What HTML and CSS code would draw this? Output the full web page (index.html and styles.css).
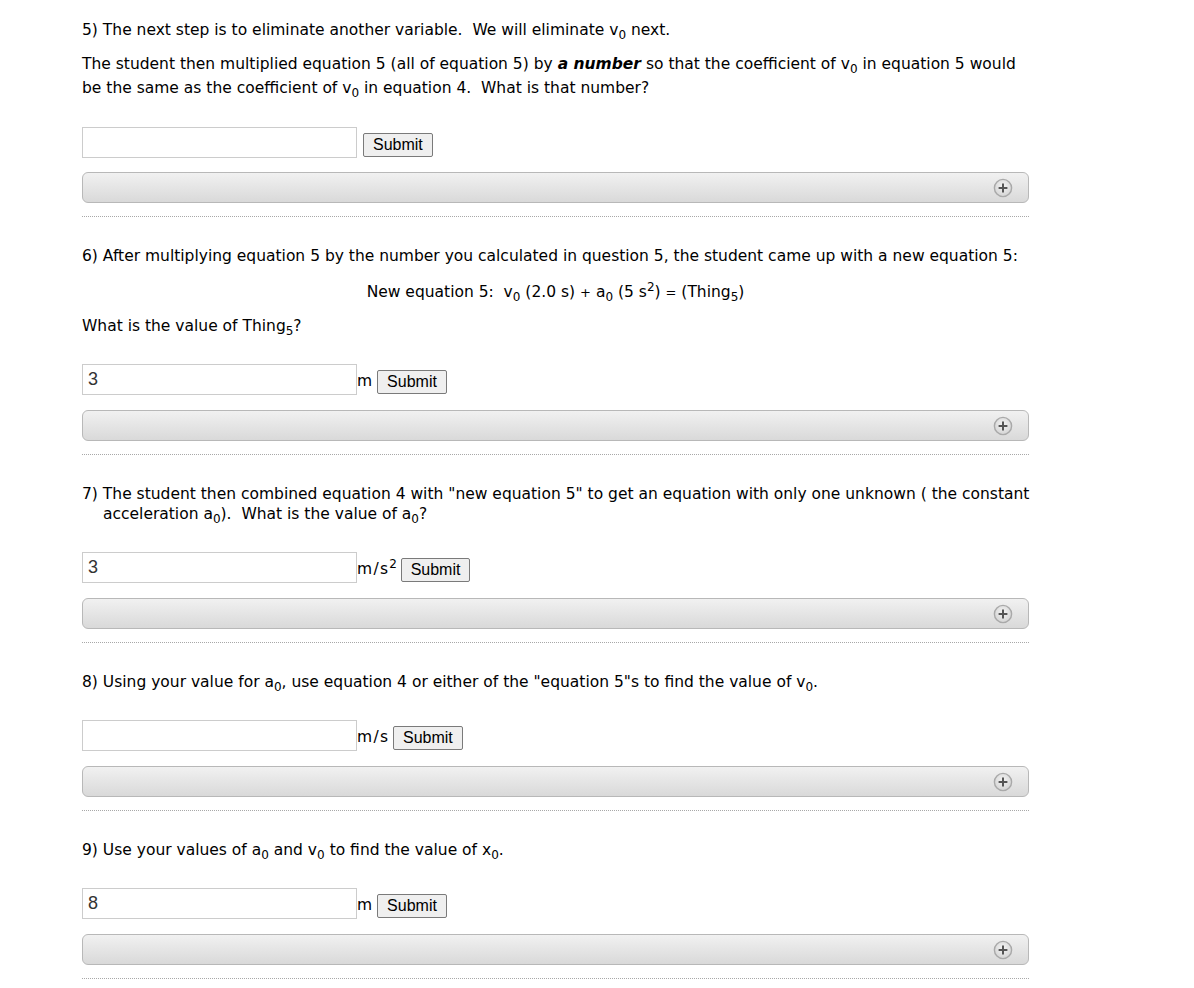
FILE: index.html
```html
<!DOCTYPE html>
<html>
<head>
<meta charset="utf-8">
<link rel="stylesheet" href="styles.css">
</head>
<body>
<div class="page">

  <section class="q">
    <p class="title">5) The next step is to eliminate another variable.&nbsp; We will eliminate v<sub>0</sub> next.</p>
    <p class="body">The student then multiplied equation 5 (all of equation 5) by <b><i>a number</i></b> so that the coefficient of v<sub>0</sub> in equation 5 would be the same as the coefficient of v<sub>0</sub> in equation 4.&nbsp; What is that number?</p>
    <div class="answer">
      <input class="field" type="text" value="">
      <button class="submit submit-nounit">Submit</button>
    </div>
    <div class="bar"><svg class="plus" viewBox="0 0 20 20" width="20" height="20"><defs><radialGradient id="g1" cx="50%" cy="40%" r="60%"><stop offset="0" stop-color="#f4f4f4"/><stop offset="1" stop-color="#d4d4d4"/></radialGradient></defs><circle cx="10" cy="10" r="8.6" fill="url(#g1)" stroke="#a9a9a9" stroke-width="1.4"/><path d="M10 5.6V14.4M5.6 10H14.4" stroke="#555" stroke-width="2"/></svg></div>
    <div class="dots"></div>
  </section>

  <section class="q">
    <p class="title">6) After multiplying equation 5 by the number you calculated in question 5, the student came up with a new equation 5:</p>
    <p class="eq">New equation 5:&nbsp; v<sub>0</sub> (2.0 s) <span class="op">+</span> a<sub>0</sub> (5 s<sup>2</sup>) <span class="op">=</span> (Thing<sub>5</sub>)</p>
    <p class="ask">What is the value of Thing<sub>5</sub>?</p>
    <div class="answer">
      <input class="field" type="text" value="3">
      <span class="unit">m</span>
      <button class="submit">Submit</button>
    </div>
    <div class="bar"><svg class="plus" viewBox="0 0 20 20" width="20" height="20"><defs><radialGradient id="g2" cx="50%" cy="40%" r="60%"><stop offset="0" stop-color="#f4f4f4"/><stop offset="1" stop-color="#d4d4d4"/></radialGradient></defs><circle cx="10" cy="10" r="8.6" fill="url(#g2)" stroke="#a9a9a9" stroke-width="1.4"/><path d="M10 5.6V14.4M5.6 10H14.4" stroke="#555" stroke-width="2"/></svg></div>
    <div class="dots"></div>
  </section>

  <section class="q">
    <p class="title hang">7) The student then combined equation 4 with "new equation 5" to get an equation with only one unknown ( the constant acceleration a<sub>0</sub>).&nbsp; What is the value of a<sub>0</sub>?</p>
    <div class="answer">
      <input class="field" type="text" value="3">
      <span class="unit">m/s<sup>2</sup></span>
      <button class="submit">Submit</button>
    </div>
    <div class="bar"><svg class="plus" viewBox="0 0 20 20" width="20" height="20"><defs><radialGradient id="g3" cx="50%" cy="40%" r="60%"><stop offset="0" stop-color="#f4f4f4"/><stop offset="1" stop-color="#d4d4d4"/></radialGradient></defs><circle cx="10" cy="10" r="8.6" fill="url(#g3)" stroke="#a9a9a9" stroke-width="1.4"/><path d="M10 5.6V14.4M5.6 10H14.4" stroke="#555" stroke-width="2"/></svg></div>
    <div class="dots"></div>
  </section>

  <section class="q">
    <p class="title">8) Using your value for a<sub>0</sub>, use equation 4 or either of the "equation 5"s to find the value of v<sub>0</sub>.</p>
    <div class="answer">
      <input class="field" type="text" value="">
      <span class="unit">m/s</span>
      <button class="submit">Submit</button>
    </div>
    <div class="bar"><svg class="plus" viewBox="0 0 20 20" width="20" height="20"><defs><radialGradient id="g4" cx="50%" cy="40%" r="60%"><stop offset="0" stop-color="#f4f4f4"/><stop offset="1" stop-color="#d4d4d4"/></radialGradient></defs><circle cx="10" cy="10" r="8.6" fill="url(#g4)" stroke="#a9a9a9" stroke-width="1.4"/><path d="M10 5.6V14.4M5.6 10H14.4" stroke="#555" stroke-width="2"/></svg></div>
    <div class="dots"></div>
  </section>

  <section class="q">
    <p class="title">9) Use your values of a<sub>0</sub> and v<sub>0</sub> to find the value of x<sub>0</sub>.</p>
    <div class="answer">
      <input class="field" type="text" value="8">
      <span class="unit">m</span>
      <button class="submit">Submit</button>
    </div>
    <div class="bar"><svg class="plus" viewBox="0 0 20 20" width="20" height="20"><defs><radialGradient id="g5" cx="50%" cy="40%" r="60%"><stop offset="0" stop-color="#f4f4f4"/><stop offset="1" stop-color="#d4d4d4"/></radialGradient></defs><circle cx="10" cy="10" r="8.6" fill="url(#g5)" stroke="#a9a9a9" stroke-width="1.4"/><path d="M10 5.6V14.4M5.6 10H14.4" stroke="#555" stroke-width="2"/></svg></div>
    <div class="dots"></div>
  </section>

</div>
</body>
</html>
```

FILE: styles.css
```css
html, body {
  margin: 0;
  padding: 0;
  background: #fff;
}

.page {
  width: 947px;
  padding: 20px 0 0 82px;
  font-family: "DejaVu Sans", sans-serif;
  font-size: 15.5px;
  color: #000;
}

.q {
  display: flex;
  flex-direction: column;
}

.q + .q {
  margin-top: 29px;
}

p {
  margin: 0;
  line-height: 20px;
}

.title {
  margin-right: -12px;
}

sub {
  font-size: 12px;
  line-height: 0;
  vertical-align: -4px;
}

sup {
  font-size: 12px;
  line-height: 0;
  vertical-align: 6px;
}

.body {
  margin-top: 12px;
  line-height: 24px;
}

.eq {
  margin-top: 16px;
  text-align: center;
}

.op {
  font-size: 13px;
}

.ask {
  margin-top: 13px;
}

.hang {
  padding-left: 21px;
  text-indent: -21px;
}

.answer {
  display: flex;
  align-items: center;
  margin-top: 28px;
  height: 31px;
}

.body + .answer {
  margin-top: 27px;
}

.field {
  box-sizing: border-box;
  width: 275px;
  height: 31px;
  margin: 0;
  padding: 0 5px;
  border: 1px solid #cccccc;
  font-family: "Liberation Sans", Arial, sans-serif;
  font-size: 18px;
  color: #333;
  outline: none;
}

.unit {
  margin: 2px -1.3px 0 0;
  letter-spacing: 1.3px;
}

.unit sup {
  letter-spacing: 0;
}

.submit {
  box-sizing: border-box;
  height: 24px;
  margin: 4px 0 0 5px;
  padding: 0 9px;
  border: 1px solid #7a7a7a;
  border-radius: 2px;
  background: #efefef;
  font-family: "Liberation Sans", Arial, sans-serif;
  font-size: 16px;
  line-height: 20px;
  color: #000;
}

.submit-nounit {
  margin-left: 6px;
}

.bar {
  box-sizing: border-box;
  height: 31px;
  margin-top: 15px;
  border: 1px solid #b8b8b8;
  border-radius: 6px;
  background: linear-gradient(#f1f1f1, #d9d9d9);
  display: flex;
  align-items: center;
  justify-content: flex-end;
  padding-right: 15px;
}

.body ~ .bar {
  margin-top: 14px;
}

.plus {
  display: block;
}

.dots {
  margin-top: 13px;
  border-top: 1px dotted #a8a8a8;
}
```
